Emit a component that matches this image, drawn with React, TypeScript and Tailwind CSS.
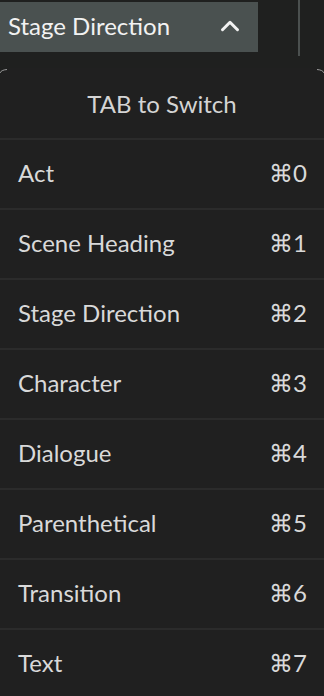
import { ChevronUp } from 'lucide-react';

const items = [
  { label: 'Act', key: '0' },
  { label: 'Scene Heading', key: '1' },
  { label: 'Stage Direction', key: '2' },
  { label: 'Character', key: '3' },
  { label: 'Dialogue', key: '4' },
  { label: 'Parenthetical', key: '5' },
  { label: 'Transition', key: '6' },
  { label: 'Text', key: '7' },
];

export default function App() {
  return (
    <div
      className="w-[324px] h-[696px] overflow-hidden bg-[#1f201f] text-[#d9d9d9]"
      style={{ fontFamily: 'Lato, "Noto Sans", sans-serif' }}
    >
      <div className="flex h-[56px] items-start">
        <button className="mt-[2px] flex h-[50px] w-[258px] items-center justify-between bg-[#4a5150] pb-[3px] pl-[8px] pr-[13px] text-[24px] text-[#f2f2f2]">
          <span>Stage Direction</span>
          <ChevronUp className="h-[30px] w-[30px]" strokeWidth={2.4} />
        </button>
        <div className="ml-[40px] h-[56px] w-[2px] bg-[#4b504f]" />
      </div>

      <div className="mt-[12px] rounded-t-[10px] bg-[#202020]">
        <div className="flex h-[4px] justify-between">
          <svg width="8" height="4" viewBox="0 0 8 4" className="mt-[1px]">
            <path d="M0 4 Q1 1 7 0.5" stroke="#9a9a9a" strokeWidth="1" fill="none" />
          </svg>
          <svg width="8" height="4" viewBox="0 0 8 4" className="mt-[1px]">
            <path d="M8 4 Q7 1 1 0.5" stroke="#9a9a9a" strokeWidth="1" fill="none" />
          </svg>
        </div>
        <div className="flex h-[66px] items-center justify-center pb-[3px] text-[24px] text-[#d4d4d4]">
          TAB to Switch
        </div>
        {items.map((item) => (
          <div
            key={item.key}
            className="flex h-[70px] items-center justify-between border-t-2 border-[#2b2b2b] pb-[3px] pl-[18px] pr-[17px] text-[24px]"
          >
            <span>{item.label}</span>
            <span>⌘{item.key}</span>
          </div>
        ))}
      </div>
    </div>
  );
}
